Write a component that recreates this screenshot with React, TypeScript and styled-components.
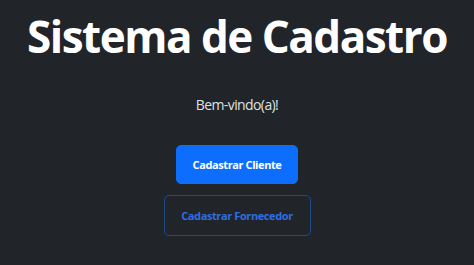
import React from "react";
import styled, { createGlobalStyle } from "styled-components";

const Global = createGlobalStyle`
  html, body { margin: 0; padding: 0; background: #212529; }
  body { font-family: "Open Sans", "Noto Sans", sans-serif; color: #f8f9fa; }
`;

const Page = styled.main`
  width: 474px;
  height: 265px;
  box-sizing: border-box;
  display: flex;
  flex-direction: column;
  align-items: center;
  padding-top: 4px;
  background: #212529;
  overflow: hidden;
`;

const Title = styled.h1`
  margin: 0;
  font-family: "Open Sans", sans-serif;
  font-size: 44px;
  font-weight: 700;
  line-height: 64px;
  color: #ffffff;
  letter-spacing: -1.5px;
  white-space: nowrap;
`;

const Welcome = styled.p`
  margin: 27px 0 0;
  font-size: 14px;
  line-height: 20px;
  letter-spacing: -0.6px;
  color: #dee2e6;
`;

const Actions = styled.div`
  display: flex;
  flex-direction: column;
  align-items: center;
  gap: 11px;
  margin-top: 30px;
`;

const Button = styled.button<{ $variant: "solid" | "outline" }>`
  font-family: "Open Sans", "Noto Sans", sans-serif;
  font-weight: 700;
  font-size: 11px;
  letter-spacing: -0.4px;
  border-radius: 5px;
  cursor: pointer;
  box-sizing: border-box;
  padding: 0;
  background: ${(p) => (p.$variant === "solid" ? "#0d6efd" : "transparent")};
  color: ${(p) => (p.$variant === "solid" ? "#ffffff" : "#2f6de0")};
  border: 1px solid ${(p) => (p.$variant === "solid" ? "#0d6efd" : "#1f4a88")};
  height: ${(p) => (p.$variant === "solid" ? "39px" : "41px")};
  width: ${(p) => (p.$variant === "solid" ? "122px" : "147px")};
`;

export default function App() {
  return (
    <>
      <Global />
      <Page>
        <Title>Sistema de Cadastro</Title>
        <Welcome>Bem-vindo(a)!</Welcome>
        <Actions>
          <Button $variant="solid">Cadastrar Cliente</Button>
          <Button $variant="outline">Cadastrar Fornecedor</Button>
        </Actions>
      </Page>
    </>
  );
}
